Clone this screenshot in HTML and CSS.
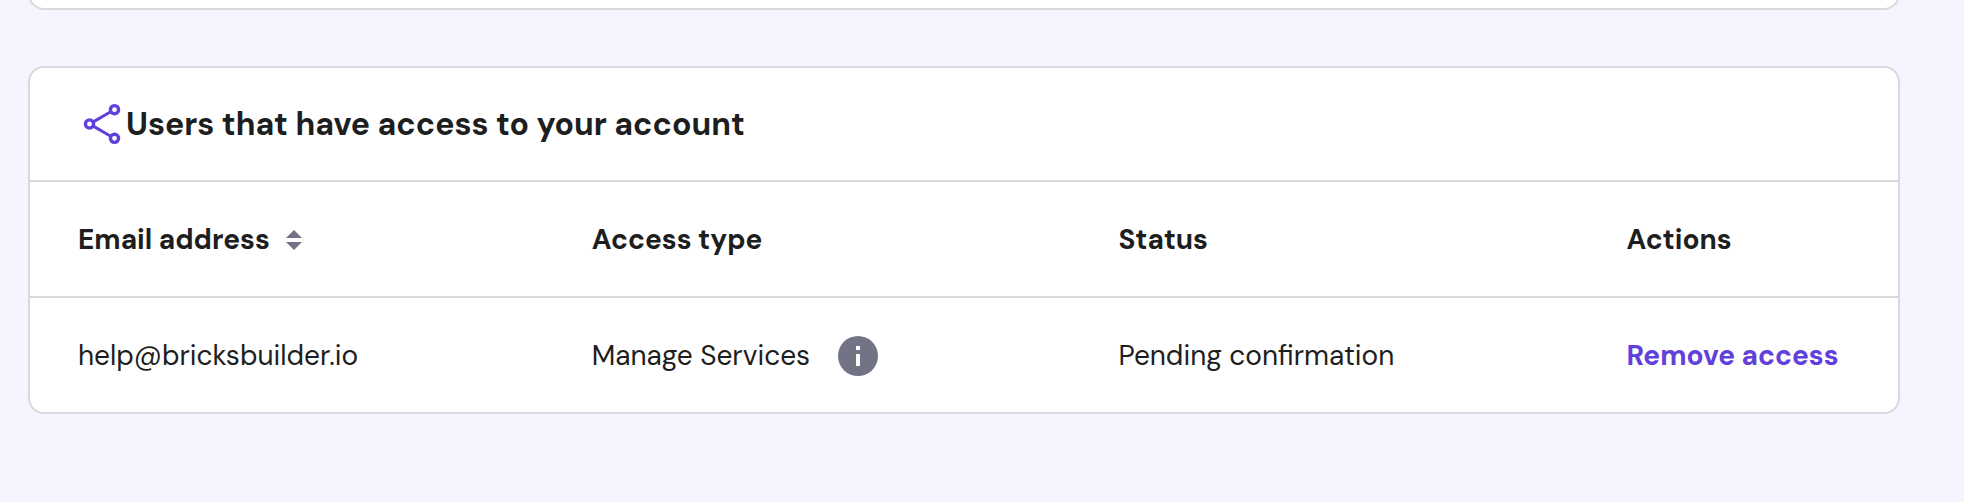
FILE: index.html
```html
<!DOCTYPE html>
<html lang="en">
<head>
  <meta charset="UTF-8">
  <title>Account sharing</title>
  <link rel="stylesheet" href="styles.css">
</head>
<body>
  <main class="page">
    <section class="card card-previous"></section>

    <section class="card">
      <header class="card-header">
        <svg class="share-icon" viewBox="0 0 48 48" fill="none" stroke="currentColor" stroke-width="3.4" aria-hidden="true">
          <circle cx="11.5" cy="24" r="4.1"/>
          <circle cx="36.5" cy="9.7" r="4.1"/>
          <circle cx="36.5" cy="38.3" r="4.1"/>
          <path d="M15.2 21.9 32.8 11.8M15.2 26.1l17.6 10.1" stroke-width="3"/>
        </svg>
        <h2>Users that have access to your account</h2>
      </header>
      <table class="users-table">
        <thead>
          <tr>
            <th class="col-email" scope="col">
              <button class="sort-button" type="button">
                Email address
                <svg class="sort-icon" viewBox="0 0 16 20" fill="currentColor" aria-hidden="true">
                  <path d="M8 0l8 8H0zM8 20l-8-8h16z"/>
                </svg>
              </button>
            </th>
            <th class="col-type" scope="col">Access type</th>
            <th class="col-status" scope="col">Status</th>
            <th scope="col">Actions</th>
          </tr>
        </thead>
        <tbody>
          <tr>
            <td>help@bricksbuilder.io</td>
            <td>
              <div class="access-type">
                Manage Services
                <button class="info-button" type="button" aria-label="Access type info">
                  <svg viewBox="0 0 40 40" aria-hidden="true">
                    <circle cx="20" cy="20" r="20" fill="#727384"/>
                    <path d="M18 10h4v4h-4zM18 18h4v12h-4z" fill="#fff"/>
                  </svg>
                </button>
              </div>
            </td>
            <td>Pending confirmation</td>
            <td><button class="remove-button" type="button">Remove access</button></td>
          </tr>
        </tbody>
      </table>
    </section>
  </main>
</body>
</html>
```
FILE: styles.css
```css
* {
  box-sizing: border-box;
}
body {
  margin: 0;
  background-color: #f4f5ff;
  color: #1d1e20;
  font-family: "DM Sans", Inter, "Open Sans", sans-serif;
  font-size: 28px;
  line-height: 40px;
  overflow: hidden;
}
.page {
  padding: 0 64px 0 28px;
}
.card {
  margin-bottom: 56px;
  background-color: #fff;
  border: 2px solid #d9d9da;
  border-radius: 16px;
}
/* Scrolled card, only its lower edge is in view */
.card-previous {
  height: 50px;
  margin-top: -40px;
}
.card-header {
  display: flex;
  align-items: center;
  height: 112px;
  padding: 0 48px;
}
.card-header h2 {
  margin: 0;
  font-size: 32px;
  font-weight: 700;
}
.share-icon {
  flex: none;
  width: 48px;
  height: 48px;
  color: #6140dc;
}
.users-table {
  width: 100%;
  table-layout: fixed;
  border-collapse: separate;
  border-spacing: 0;
}
.users-table th,
.users-table td {
  height: 116px;
  padding: 2px 0 0 48px;
  border-top: 2px solid #d9d9da;
  text-align: left;
  white-space: nowrap;
}
.users-table th {
  font-weight: 700;
}
.col-email {
  width: 27.5%;
}
.col-type {
  width: 28.2%;
}
.col-status {
  width: 27.2%;
}
button {
  padding: 0;
  border: none;
  background: none;
  color: inherit;
  font: inherit;
  cursor: pointer;
}
.sort-button {
  display: flex;
  align-items: center;
  gap: 16px;
}
.sort-icon {
  width: 16px;
  height: 20px;
  color: #727384;
}
.access-type {
  display: flex;
  align-items: center;
  gap: 28px;
}
.info-button,
.info-button svg {
  display: block;
  width: 40px;
  height: 40px;
}
.remove-button {
  color: #6140dc;
  font-weight: 700;
}
```
